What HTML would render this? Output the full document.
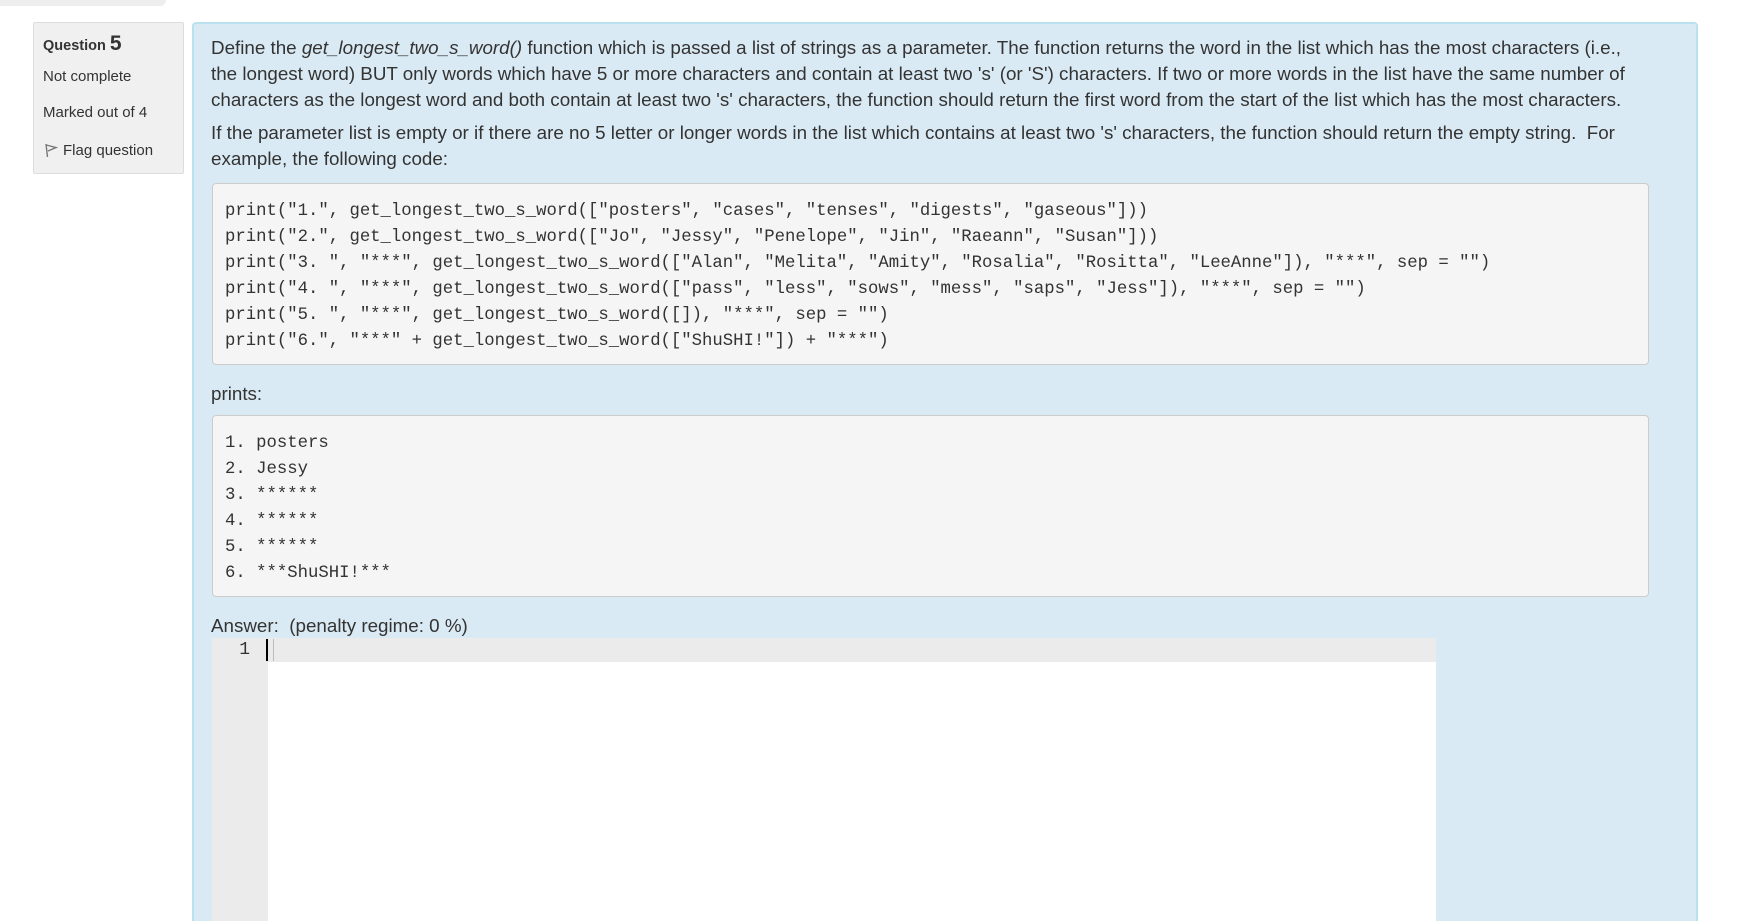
<!DOCTYPE html>
<html style="overflow:hidden;height:921px"><head><meta charset="utf-8"><style>
*{box-sizing:border-box;margin:0;padding:0}
body{width:1762px;height:921px;overflow:hidden;background:#fff;font-family:"Liberation Sans",sans-serif;color:#333;position:relative}
.tab{position:absolute;left:0;top:0;width:166px;height:6px;background:#eee;border-radius:0 0 8px 0}
.info{position:absolute;left:33px;top:22px;width:151px;height:152px;background:#f0f0f0;border:1px solid #ddd;border-radius:2px;font-size:15px;color:#333}
.info div{position:absolute;left:9px;white-space:nowrap}
.panel{position:absolute;left:192px;top:22px;width:1506px;height:899px;background:#daeaf4;border:2px solid #b9e2ee;border-bottom:none;border-radius:4px 4px 0 0}
.t{position:absolute;left:211px;font-size:18.8px;line-height:26px;white-space:nowrap;color:#333}
pre{position:absolute;left:212px;width:1437px;height:182px;background:#f5f5f5;border:1px solid #ccc;border-radius:4px;font-family:"Liberation Mono",monospace;font-size:17.3px;line-height:26px;padding:15px 0 0 12px;color:#333}
.ed{position:absolute;left:212px;top:638px;width:1224px;height:283px;background:#fff}
.gut{position:absolute;left:0;top:0;width:56px;height:100%;background:#ebebeb}
.act{position:absolute;left:56px;top:0;right:0;height:24px;background:#ebebeb}
.ln{position:absolute;left:0;top:0;width:38px;text-align:right;font-family:"Liberation Mono",monospace;font-size:18px;line-height:24px;color:#333}
</style></head><body>
<div class="tab"></div>
<div class="info">
<div style="top:9px;font-weight:bold;font-size:14.5px">Question <span style="font-size:21px">5</span></div>
<div style="top:45px">Not complete</div>
<div style="top:81px">Marked out of 4</div>
<div style="top:119px"><svg width="16" height="16" viewBox="0 0 16 16" style="vertical-align:-3px;margin-right:4px"><path d="M3 2 L4.5 15 M3.2 3 L13 5.5 L5 9" fill="none" stroke="#777" stroke-width="1.4"/></svg>Flag question</div>
</div>
<div class="panel"></div>
<div class="t" style="top:35px">Define the <i>get_longest_two_s_word()</i> function which is passed a list of strings as a parameter. The function returns the word in the list which has the most characters (i.e.,<br>the longest word) BUT only words which have 5 or more characters and contain at least two 's' (or 'S') characters. If two or more words in the list have the same number of<br>characters as the longest word and both contain at least two 's' characters, the function should return the first word from the start of the list which has the most characters.</div>
<div class="t" style="top:120px">If the parameter list is empty or if there are no 5 letter or longer words in the list which contains at least two 's' characters, the function should return the empty string.&nbsp; For<br>example, the following code:</div>
<pre style="top:183px">print("1.", get_longest_two_s_word(["posters", "cases", "tenses", "digests", "gaseous"]))
print("2.", get_longest_two_s_word(["Jo", "Jessy", "Penelope", "Jin", "Raeann", "Susan"]))
print("3. ", "***", get_longest_two_s_word(["Alan", "Melita", "Amity", "Rosalia", "Rositta", "LeeAnne"]), "***", sep = "")
print("4. ", "***", get_longest_two_s_word(["pass", "less", "sows", "mess", "saps", "Jess"]), "***", sep = "")
print("5. ", "***", get_longest_two_s_word([]), "***", sep = "")
print("6.", "***" + get_longest_two_s_word(["ShuSHI!"]) + "***")</pre>
<div class="t" style="top:381px">prints:</div>
<pre style="top:415px">1. posters
2. Jessy
3. ******
4. ******
5. ******
6. ***ShuSHI!***</pre>
<div class="t" style="top:613px">Answer:&nbsp; (penalty regime: 0 %)</div>
<div class="ed"><div class="gut"></div><div class="act"></div><div class="ln">1</div>
<div style="position:absolute;left:54px;top:1px;width:2px;height:22px;background:#000"></div>
<div style="position:absolute;left:61px;top:1px;width:1px;height:22px;background:#bbb"></div></div>
</body></html>
